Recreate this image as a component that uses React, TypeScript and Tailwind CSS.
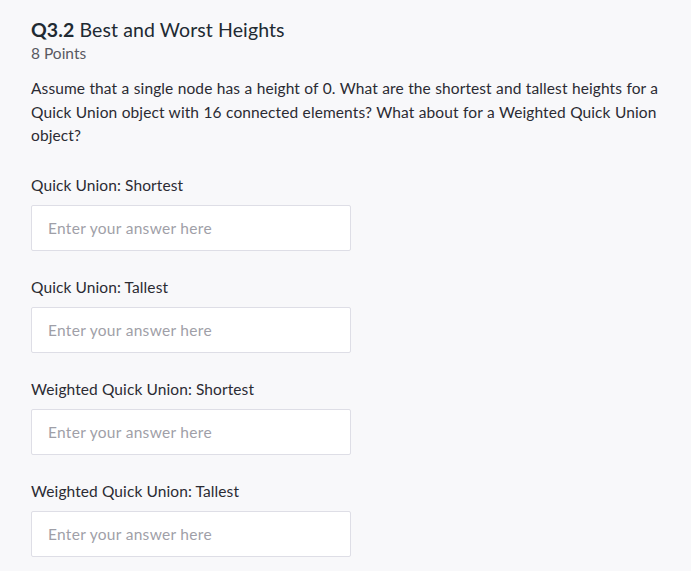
import React from "react";

const fields = [
  "Quick Union: Shortest",
  "Quick Union: Tallest",
  "Weighted Quick Union: Shortest",
  "Weighted Quick Union: Tallest",
];

export default function App() {
  return (
    <div
      className="min-h-[571px] w-full bg-[#f8f8fa] pl-[31px] pr-[20px] pt-[17px] text-[#2b2b33]"
      style={{ fontFamily: 'Lato, "Liberation Sans", sans-serif' }}
    >
      <h2 className="text-[19.5px] leading-[26px] tracking-[0.1px] text-[#212a32]">
        <span className="font-bold">Q3.2</span> Best and Worst Heights
      </h2>
      <div className="text-[15.5px] leading-[20px] text-[#595962]">8 Points</div>
      <p className="mt-[14px] w-[640px] text-[15.5px] leading-[23.5px] tracking-[0.1px] [word-spacing:0.3px]">
        Assume that a single node has a height of 0. What are the shortest and tallest heights for a Quick Union object
        with 16 connected elements? What about for a Weighted Quick Union object?
      </p>
      <div className="mt-[26px] flex flex-col gap-[25px]">
        {fields.map((f) => (
          <div key={f} className="flex flex-col">
            <label className="text-[15.5px] leading-[22px] tracking-[0.1px]">{f}</label>
            <input
              className="mt-[9px] h-[46px] w-[320px] rounded-[2px] border border-[#dedee6] bg-white px-[16px] text-[15.5px] tracking-[0.3px] placeholder:text-[#9f9fa8] outline-none"
              placeholder="Enter your answer here"
            />
          </div>
        ))}
      </div>
    </div>
  );
}
